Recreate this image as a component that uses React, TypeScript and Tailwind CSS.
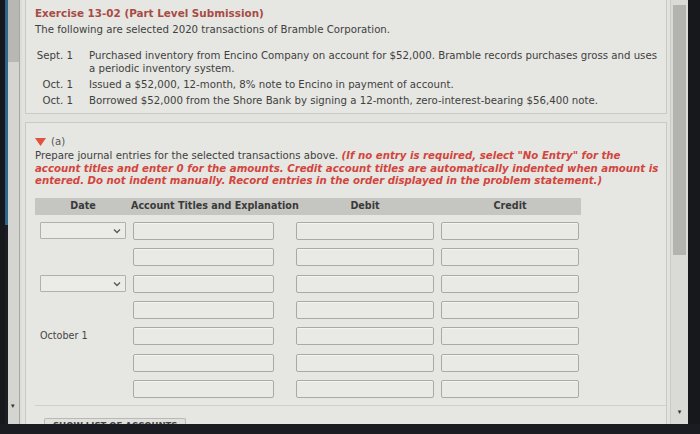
import React from 'react';

const font = { fontFamily: '"DejaVu Sans", Verdana, sans-serif' };

const transactions = [
  {
    date: 'Sept. 1',
    text: 'Purchased inventory from Encino Company on account for $52,000. Bramble records purchases gross and uses a periodic inventory system.',
  },
  { date: 'Oct. 1', text: 'Issued a $52,000, 12-month, 8% note to Encino in payment of account.' },
  {
    date: 'Oct. 1',
    text: 'Borrowed $52,000 from the Shore Bank by signing a 12-month, zero-interest-bearing $56,400 note.',
  },
];

type Row = { kind: 'select' | 'text' | 'none'; label?: string };

const rows: Row[] = [
  { kind: 'select' },
  { kind: 'none' },
  { kind: 'select' },
  { kind: 'none' },
  { kind: 'text', label: 'October 1' },
  { kind: 'none' },
  { kind: 'none' },
];

function Field({ className = '' }: { className?: string }) {
  return (
    <div
      className={[
        'h-[18px] rounded-[2px] border border-[#a9a9a6] bg-[#e9e9e6] shadow-[inset_0_1px_0_#f4f4f1]',
        className,
      ].join(' ')}
    />
  );
}

function DateSelect() {
  return (
    <div className="ml-[5px] flex h-[17px] w-[86px] items-center justify-end rounded-[1px] border border-[#b0b0ad] bg-[#ebebe8] pr-[4px]">
      <svg width="8" height="6" viewBox="0 0 8 6" aria-hidden>
        <path d="M1 1.5 L4 4.5 L7 1.5" fill="none" stroke="#5a5a5a" strokeWidth="1.4" />
      </svg>
    </div>
  );
}

export default function App() {
  return (
    <div className="flex h-[434px] w-[700px] flex-col overflow-hidden bg-[#141519]" style={font}>
      <div className="flex h-[424px] shrink-0 overflow-hidden">
        {/* left bezel + browser edge */}
        <div className="w-[5px] bg-[#17181c]" />
        <div className="flex w-[3px] flex-col">
          <div className="h-[225px] bg-[#2f6690]" />
          <div className="flex-1 bg-[#1c1d22]" />
        </div>
        <div className="flex w-[12px] flex-col border-r border-[#a6a6a2] bg-[#d4d4d0]">
          <div className="h-[62px] bg-[#b7b7b3]" />
          <div className="flex-1" />
          <div className="mb-[14px] pl-[3px] text-[7px] leading-none text-[#333]">▾</div>
        </div>
        <div className="w-[2px] bg-[#deded9]" />

        {/* page */}
        <div className="flex flex-1 flex-col bg-[#e2e2de] px-[3px]">
          {/* question box */}
          <div className="h-[114px] shrink-0 border border-t-0 border-[#c9c9c5] bg-[#e6e6e2] pl-[9px] pt-[6px] text-[#3f3f3f]">
            <div className="text-[10.4px] font-bold leading-[14px] text-[#a84b45]">
              Exercise 13-02 (Part Level Submission)
            </div>
            <div className="mt-[3px] text-[10.2px] leading-[14px]">
              The following are selected 2020 transactions of Bramble Corporation.
            </div>
            <div className="mt-[12px] flex flex-col gap-[3px]">
              {transactions.map((t, i) => (
                <div key={i} className="flex text-[10.2px] leading-[13px]">
                  <div className="w-[38px] shrink-0 text-right">{t.date}</div>
                  <div className="ml-[16px] w-[570px]">{t.text}</div>
                </div>
              ))}
            </div>
          </div>

          {/* part (a) */}
          <div className="mt-[8px] flex min-h-0 flex-1 flex-col border border-b-0 border-[#c9c9c5] bg-[#e6e6e2] pl-[9px] pt-[12px]">
            <div className="flex h-[13px] shrink-0 items-center gap-[5px] text-[10.2px] leading-[13px]">
              <svg width="11" height="8" viewBox="0 0 11 8" aria-hidden>
                <path d="M0 0 H11 L5.5 8 Z" fill="#e0533f" />
              </svg>
              <span className="text-[#555]">(a)</span>
            </div>
            <div className="mt-[2px] w-[625px] shrink-0 text-[10.2px] leading-[12.6px] text-[#3f3f3f]">
              Prepare journal entries for the selected transactions above.{' '}
              <span className="font-bold italic text-[#d2453d]">
                (If no entry is required, select "No Entry" for the account titles and enter 0 for the
                amounts. Credit account titles are automatically indented when amount is entered. Do not
                indent manually. Record entries in the order displayed in the problem statement.)
              </span>
            </div>

            {/* table header */}
            <div className="mt-[10px] flex h-[17px] w-[546px] shrink-0 items-center whitespace-nowrap bg-[#c5c5c1] text-[9.6px] font-bold text-[#3a3a3a]">
              <div className="w-[96px] text-center">Date</div>
              <div className="w-[165px]">Account Titles and Explanation</div>
              <div className="w-[145px] pr-[7px] text-center">Debit</div>
              <div className="w-[140px] pr-[2px] text-center">Credit</div>
            </div>

            {/* rows */}
            <div className="mt-[7px] flex shrink-0 flex-col gap-[8.4px]">
              {rows.map((r, i) => (
                <div key={i} className="flex h-[18px] items-center">
                  <div className="w-[96px]">
                    {r.kind === 'select' ? <DateSelect /> : null}
                    {r.kind === 'text' ? (
                      <div className="ml-[5px] text-[9.6px] text-[#444]">{r.label}</div>
                    ) : null}
                  </div>
                  <div className="w-[165px] pl-[2px]">
                    <Field className="w-[141px]" />
                  </div>
                  <div className="w-[145px]">
                    <Field className="w-[138px]" />
                  </div>
                  <div className="w-[140px]">
                    <Field className="w-[138px]" />
                  </div>
                </div>
              ))}
            </div>

            {/* bottom panel */}
            <div className="mt-[7px] flex-1 shrink-0 border-t border-[#cfcfcb] pl-[9px] pt-[6px]">
              <div className="inline-block rounded-t-[2px] border border-b-0 border-[#b9b9b5] bg-[#e0e0dc] px-[8px] pt-[2px] text-[8.5px] font-bold leading-[10px] text-[#444]">
                SHOW LIST OF ACCOUNTS
              </div>
            </div>
          </div>
        </div>

        {/* right scrollbar */}
        <div className="flex w-[18px] flex-col border-l border-[#c9c9c5] bg-[#dadad6] px-[2px] pt-[5px]">
          <div className="h-[250px] bg-[#b3b3af]" />
          <div className="flex-1" />
          <div className="mb-[8px] text-center text-[7px] leading-none text-[#333]">▾</div>
        </div>
        <div className="w-[12px] bg-[#17181c]" />
      </div>
      <div className="flex-1 bg-[#1b1c21]" />
    </div>
  );
}
